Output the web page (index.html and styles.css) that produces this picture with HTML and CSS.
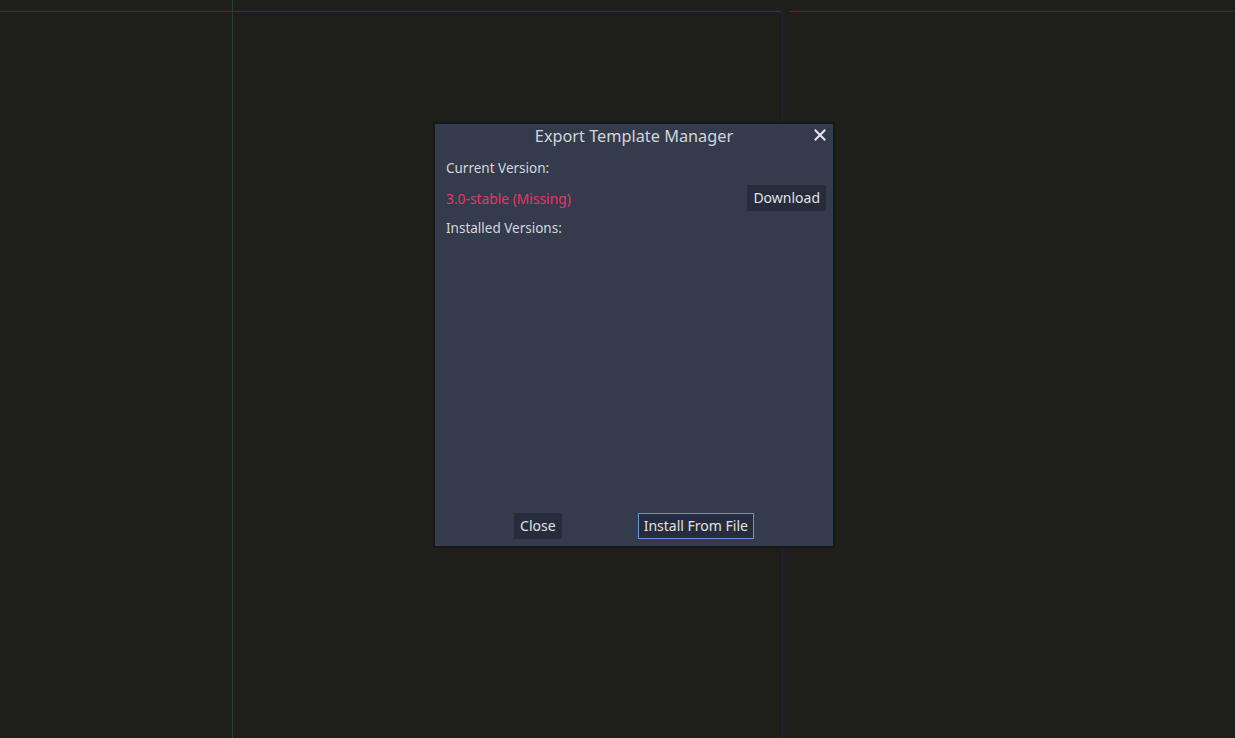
FILE: index.html
```html
<!DOCTYPE html>
<html>
<head>
<meta charset="utf-8">
<link rel="stylesheet" href="styles.css">
</head>
<body>
<div class="viewport">
  <div class="axis-h axis-h-left"></div>
  <div class="axis-h axis-h-mid"></div>
  <div class="axis-h axis-h-right"></div>
  <div class="axis-v"></div>
  <div class="band"></div>

  <div class="dialog">
    <div class="titlebar">
      <span class="title">Export Template Manager</span>
      <svg class="close-x" width="12" height="12" viewBox="0 0 12 12">
        <path d="M1.5 1.5 L10.5 10.5 M10.5 1.5 L1.5 10.5" stroke="#e6e6e6" stroke-width="2" stroke-linecap="square"/>
      </svg>
    </div>
    <div class="body">
      <div class="row label">Current Version:</div>
      <div class="row version-row">
        <span class="missing">3.0-stable (Missing)</span>
        <button class="btn">Download</button>
      </div>
      <div class="row label">Installed Versions:</div>
      <div class="list"></div>
      <div class="footer">
        <button class="btn">Close</button>
        <button class="btn focus">Install From File</button>
      </div>
    </div>
  </div>
</div>
</body>
</html>
```

FILE: styles.css
```css
html, body {
  margin: 0;
  padding: 0;
  width: 1235px;
  height: 738px;
  overflow: hidden;
  background: #1e1e1b;
  font-family: "Noto Sans", "DejaVu Sans", sans-serif;
}
.viewport {
  position: relative;
  width: 1235px;
  height: 738px;
  background: #1e1e1b;
}
.axis-h {
  position: absolute;
  top: 11px;
  height: 1px;
  border-top: 1px solid transparent;
}
.axis-h-left { left: 0; width: 232px; background: #5a2428; border-top-color: #2a1e1e; top: 10px; }
.axis-h-mid { left: 233px; width: 548px; background: #3e2a52; border-top-color: #251e2a; top: 10px; }
.axis-h-right { left: 790px; right: 0; background: #5a2428; border-top-color: #2a1e1e; top: 10px; }
.axis-v {
  position: absolute;
  left: 232px;
  top: 0;
  width: 1px;
  height: 738px;
  background: #234236;
}
.band {
  position: absolute;
  left: 782px;
  top: 10px;
  width: 8px;
  bottom: 0;
  background: #1e1e21;
  border-left: 1px solid #242430;
  border-right: 1px solid #1f1f26;
  box-sizing: border-box;
}
.dialog {
  position: absolute;
  left: 433px;
  top: 122px;
  width: 402px;
  height: 426px;
  box-sizing: border-box;
  background: #343b4d;
  border: 2px solid #16171b;
  display: flex;
  flex-direction: column;
  color: #d6d8dc;
}
.titlebar {
  position: relative;
  height: 29px;
  display: flex;
  align-items: center;
  justify-content: center;
}
.title {
  font-size: 16.3px;
  color: #d3d5d9;
  margin-top: -5px;
}
.close-x {
  position: absolute;
  right: 7px;
  top: 5px;
}
.body {
  flex: 1;
  display: flex;
  flex-direction: column;
  padding: 0 7px 7px 11px;
}
.row {
  display: flex;
  align-items: center;
  font-size: 13.5px;
}
.label {
  height: 30px;
  color: #d4d6da;
}
.version-row {
  height: 30px;
  justify-content: space-between;
}
.missing {
  color: #e83663;
  font-size: 13.8px;
}
.list {
  flex: 1;
}
.btn {
  font-family: "Noto Sans", "DejaVu Sans", sans-serif;
  font-size: 14px;
  color: #e0e2e6;
  background: #262c3b;
  border: 1px solid #262c3b;
  height: 26px;
  padding: 0 5px;
  margin: 0;
  line-height: 24px;
}
.btn.focus {
  border-color: #6d93d6;
}
.footer {
  display: flex;
  justify-content: center;
  gap: 76px;
  height: 26px;
  margin-right: 4px;
}
```
